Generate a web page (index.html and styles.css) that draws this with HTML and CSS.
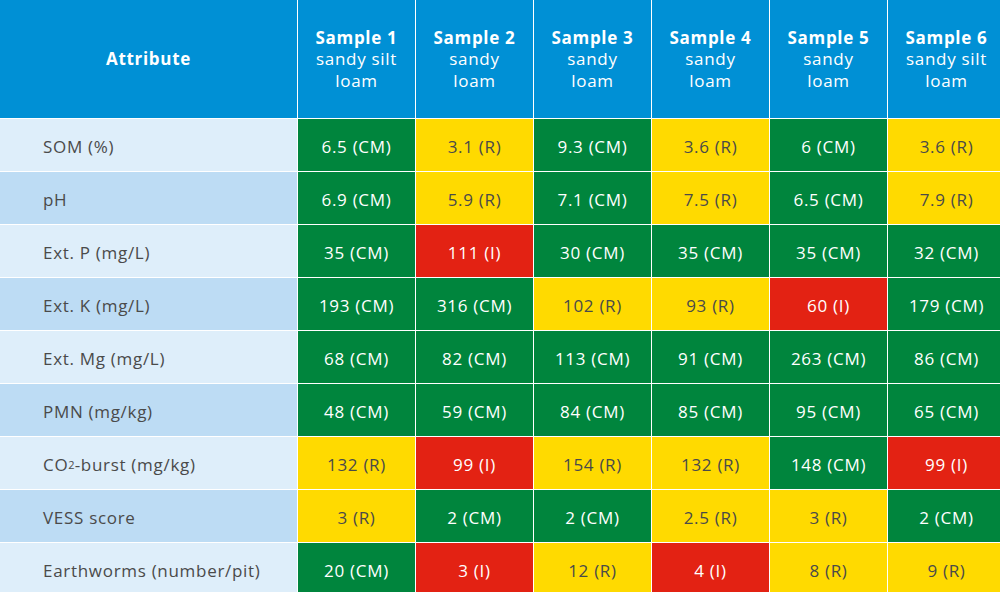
FILE: index.html
```html
<!DOCTYPE html>
<html lang="en">
<head>
<meta charset="utf-8">
<title>Soil health results</title>
<link rel="stylesheet" href="styles.css">
</head>
<body>
<div class="table" role="table">
  <div class="hd attr" role="columnheader">Attribute</div>
  <div class="hd" role="columnheader"><b>Sample 1</b><span>sandy silt</span><span>loam</span></div>
  <div class="hd" role="columnheader"><b>Sample 2</b><span>sandy</span><span>loam</span></div>
  <div class="hd" role="columnheader"><b>Sample 3</b><span>sandy</span><span>loam</span></div>
  <div class="hd" role="columnheader"><b>Sample 4</b><span>sandy</span><span>loam</span></div>
  <div class="hd" role="columnheader"><b>Sample 5</b><span>sandy</span><span>loam</span></div>
  <div class="hd" role="columnheader"><b>Sample 6</b><span>sandy silt</span><span>loam</span></div>

  <div class="lbl light">SOM (%)</div>
  <div class="c g">6.5 (CM)</div><div class="c y">3.1 (R)</div><div class="c g">9.3 (CM)</div><div class="c y">3.6 (R)</div><div class="c g">6 (CM)</div><div class="c y">3.6 (R)</div>

  <div class="lbl dark">pH</div>
  <div class="c g">6.9 (CM)</div><div class="c y">5.9 (R)</div><div class="c g">7.1 (CM)</div><div class="c y">7.5 (R)</div><div class="c g">6.5 (CM)</div><div class="c y">7.9 (R)</div>

  <div class="lbl light">Ext. P (mg/L)</div>
  <div class="c g">35 (CM)</div><div class="c r">111 (I)</div><div class="c g">30 (CM)</div><div class="c g">35 (CM)</div><div class="c g">35 (CM)</div><div class="c g">32 (CM)</div>

  <div class="lbl dark">Ext. K (mg/L)</div>
  <div class="c g">193 (CM)</div><div class="c g">316 (CM)</div><div class="c y">102 (R)</div><div class="c y">93 (R)</div><div class="c r">60 (I)</div><div class="c g">179 (CM)</div>

  <div class="lbl light">Ext. Mg (mg/L)</div>
  <div class="c g">68 (CM)</div><div class="c g">82 (CM)</div><div class="c g">113 (CM)</div><div class="c g">91 (CM)</div><div class="c g">263 (CM)</div><div class="c g">86 (CM)</div>

  <div class="lbl dark">PMN (mg/kg)</div>
  <div class="c g">48 (CM)</div><div class="c g">59 (CM)</div><div class="c g">84 (CM)</div><div class="c g">85 (CM)</div><div class="c g">95 (CM)</div><div class="c g">65 (CM)</div>

  <div class="lbl light">CO<sub class="sub">2</sub>-burst (mg/kg)</div>
  <div class="c y">132 (R)</div><div class="c r">99 (I)</div><div class="c y">154 (R)</div><div class="c y">132 (R)</div><div class="c g">148 (CM)</div><div class="c r">99 (I)</div>

  <div class="lbl dark">VESS score</div>
  <div class="c y">3 (R)</div><div class="c g">2 (CM)</div><div class="c g">2 (CM)</div><div class="c y">2.5 (R)</div><div class="c y">3 (R)</div><div class="c g">2 (CM)</div>

  <div class="lbl light">Earthworms (number/pit)</div>
  <div class="c g">20 (CM)</div><div class="c r">3 (I)</div><div class="c y">12 (R)</div><div class="c r">4 (I)</div><div class="c y">8 (R)</div><div class="c y">9 (R)</div>
</div>
</body>
</html>
```

FILE: styles.css
```css
html, body {
  margin: 0;
  padding: 0;
  background: #ffffff;
  overflow: hidden;
}

body {
  font-family: "Open Sans", "Noto Sans", "DejaVu Sans", sans-serif;
  font-size: 17px;
  letter-spacing: 0.7px;
  color: #4a4a4a;
}

.table {
  display: grid;
  grid-template-columns: 297px repeat(6, 117px);
  grid-template-rows: 118px repeat(9, 52px);
  gap: 1px;
  background: #ffffff;
  width: 1005px;
}

.hd {
  background: #0090d5;
  color: #ffffff;
  display: flex;
  flex-direction: column;
  align-items: center;
  justify-content: center;
  text-align: center;
  line-height: 21.5px;
}

.hd b {
  font-weight: 700;
}

.attr {
  font-weight: 700;
}

.lbl {
  display: flex;
  align-items: center;
  padding-left: 43px;
  padding-top: 3px;
}

.light {
  background: #deeefa;
}

.dark {
  background: #bddcf4;
}

.sub {
  font-size: 11px;
  vertical-align: -2px;
  line-height: 0;
  letter-spacing: 0;
}

.c {
  display: flex;
  align-items: center;
  justify-content: center;
  padding-top: 3px;
}

.g {
  background: #00853d;
  color: #ffffff;
}

.y {
  background: #ffda00;
  color: #4a4a4a;
}

.r {
  background: #e32213;
  color: #ffffff;
}
```
